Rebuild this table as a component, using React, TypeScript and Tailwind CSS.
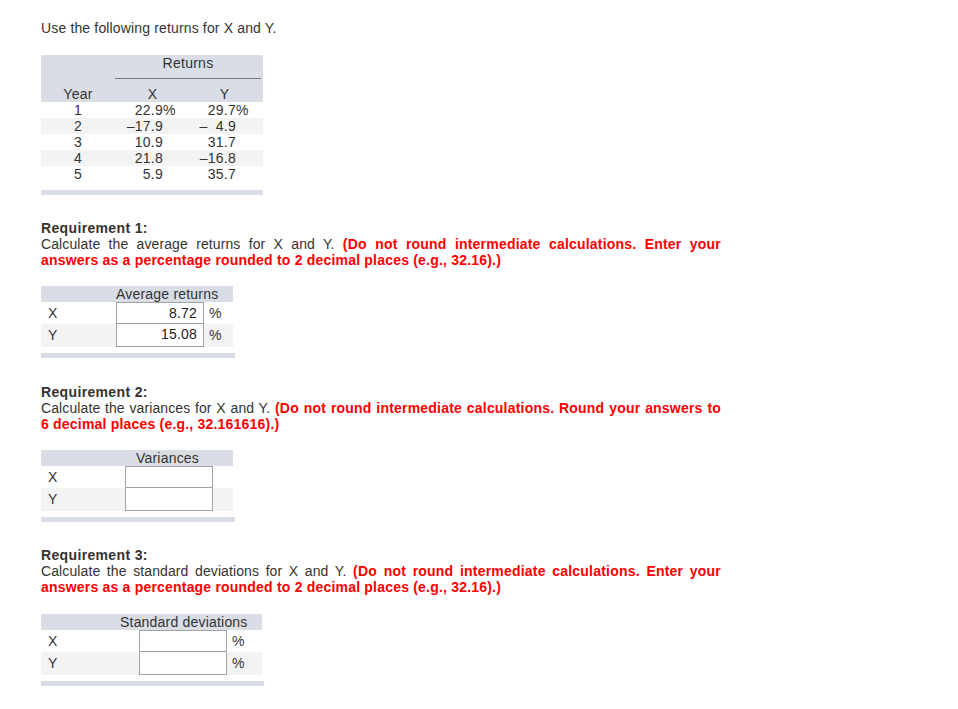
import React from 'react';

const returns = [
  { year: 1, x: '22.9', y: '29.7', pct: true },
  { year: 2, x: '–17.9', y: '–  4.9', pct: false },
  { year: 3, x: '10.9', y: '31.7', pct: false },
  { year: 4, x: '21.8', y: '–16.8', pct: false },
  { year: 5, x: '5.9', y: '35.7', pct: false },
];

function ReturnsTable() {
  return (
    <div className="w-[222px] tracking-[0.25px]">
      <div className="grid grid-cols-[74px_48px_27px_46px_25px] bg-[#d9dde6]">
        <div className="h-[24px]" />
        <div className="col-span-4 h-[24px] border-b border-[#7a7a7a] text-center leading-[16px]">Returns</div>
        <div className="h-[23px] pt-[7px] text-center leading-[16px]">Year</div>
        <div className="col-span-2 h-[23px] pt-[7px] text-center leading-[16px]">X</div>
        <div className="col-span-2 h-[23px] pt-[7px] pr-[2px] text-center leading-[16px]">Y</div>
      </div>
      {returns.map((r, i) => (
        <div
          key={r.year}
          className={`grid h-[16px] grid-cols-[74px_48px_27px_46px_25px] leading-[16px] ${i % 2 === 1 ? 'bg-[#f3f3f3]' : 'bg-white'}`}
        >
          <div className="text-center">{r.year}</div>
          <div className="text-right whitespace-pre">{r.x}</div>
          <div>{r.pct ? '%' : ''}</div>
          <div className="text-right whitespace-pre">{r.y}</div>
          <div>{r.pct ? '%' : ''}</div>
        </div>
      ))}
      <div className="mt-[8px] h-[5px] w-[222px] bg-[#d9dde6]" />
    </div>
  );
}

interface AnswerTableProps {
  header: string;
  labelW: number;
  total: number;
  showPct: boolean;
  values: [string, string];
  headerClass: string;
}

function AnswerTable({ header, labelW, total, showPct, values, headerClass }: AnswerTableProps) {
  const labelStyle = { width: labelW };
  return (
    <div style={{ width: total }} className="tracking-[0.2px]">
      <div className="flex h-[16px] bg-[#d9dde6] leading-[16px]">
        <div style={labelStyle} />
        <div className={`whitespace-nowrap ${headerClass}`}>{header}</div>
      </div>
      {['X', 'Y'].map((lab, i) => (
        <div key={lab} className={`flex items-stretch ${i === 0 ? 'h-[22px]' : 'h-[23px] bg-[#f3f3f3]'}`}>
          <div style={labelStyle} className="pl-[7px] leading-[22px]">{lab}</div>
          <div
            className={`w-[88px] border border-[#a3a3a3] bg-white pr-[6px] text-right leading-[20px] text-[#222] ${i === 1 ? '-mt-px' : ''}`}
          >
            {values[i]}
          </div>
          {showPct && <div className="pl-[5px] leading-[22px]">%</div>}
        </div>
      ))}
      <div className="mt-[6px] h-[5px] bg-[#d9dde6]" style={{ width: total + 2 }} />
    </div>
  );
}

// line breaks kept where the original wraps, first line justified
function Requirement({ n, lead, note1, note2 }: { n: number; lead: string; note1: string; note2: string }) {
  return (
    <div className="w-[680px]">
      <p className="font-bold tracking-[0.35px]">Requirement {n}:</p>
      <p className="tracking-[0.1px] text-justify [text-align-last:justify]">
        {lead}{' '}
        <span className="font-bold tracking-[0.2px] text-[#ff0000]">{note1}</span>
      </p>
      <p className="font-bold tracking-[0.2px] text-[#ff0000]">{note2}</p>
    </div>
  );
}

export default function App() {
  return (
    <div className="min-h-[709px] bg-white pl-[41px] pt-[20px] text-[14px] leading-[16px] text-[#333] [font-family:'Liberation_Sans',Arial,sans-serif]">
      <p className="tracking-[0.15px]">Use the following returns for X and Y.</p>

      <div className="mt-[19px]">
        <ReturnsTable />
      </div>

      <div className="mt-[25px]">
        <Requirement
          n={1}
          lead="Calculate the average returns for X and Y."
          note1="(Do not round intermediate calculations. Enter your"
          note2="answers as a percentage rounded to 2 decimal places (e.g., 32.16).)"
        />
      </div>

      <div className="mt-[18px]">
        <AnswerTable header="Average returns" labelW={75} total={192} showPct values={['8.72', '15.08']} headerClass="" />
      </div>

      <div className="mt-[26px]">
        <Requirement
          n={2}
          lead="Calculate the variances for X and Y."
          note1="(Do not round intermediate calculations. Round your answers to"
          note2="6 decimal places (e.g., 32.161616).)"
        />
      </div>

      <div className="mt-[18px]">
        <AnswerTable header="Variances" labelW={84} total={192} showPct={false} values={['', '']} headerClass="pl-[11px]" />
      </div>

      <div className="mt-[25px]">
        <Requirement
          n={3}
          lead="Calculate the standard deviations for X and Y."
          note1="(Do not round intermediate calculations. Enter your"
          note2="answers as a percentage rounded to 2 decimal places (e.g., 32.16).)"
        />
      </div>

      <div className="mt-[19px]">
        <AnswerTable header="Standard deviations" labelW={98} total={221} showPct values={['', '']} headerClass="-ml-[19px]" />
      </div>
    </div>
  );
}
